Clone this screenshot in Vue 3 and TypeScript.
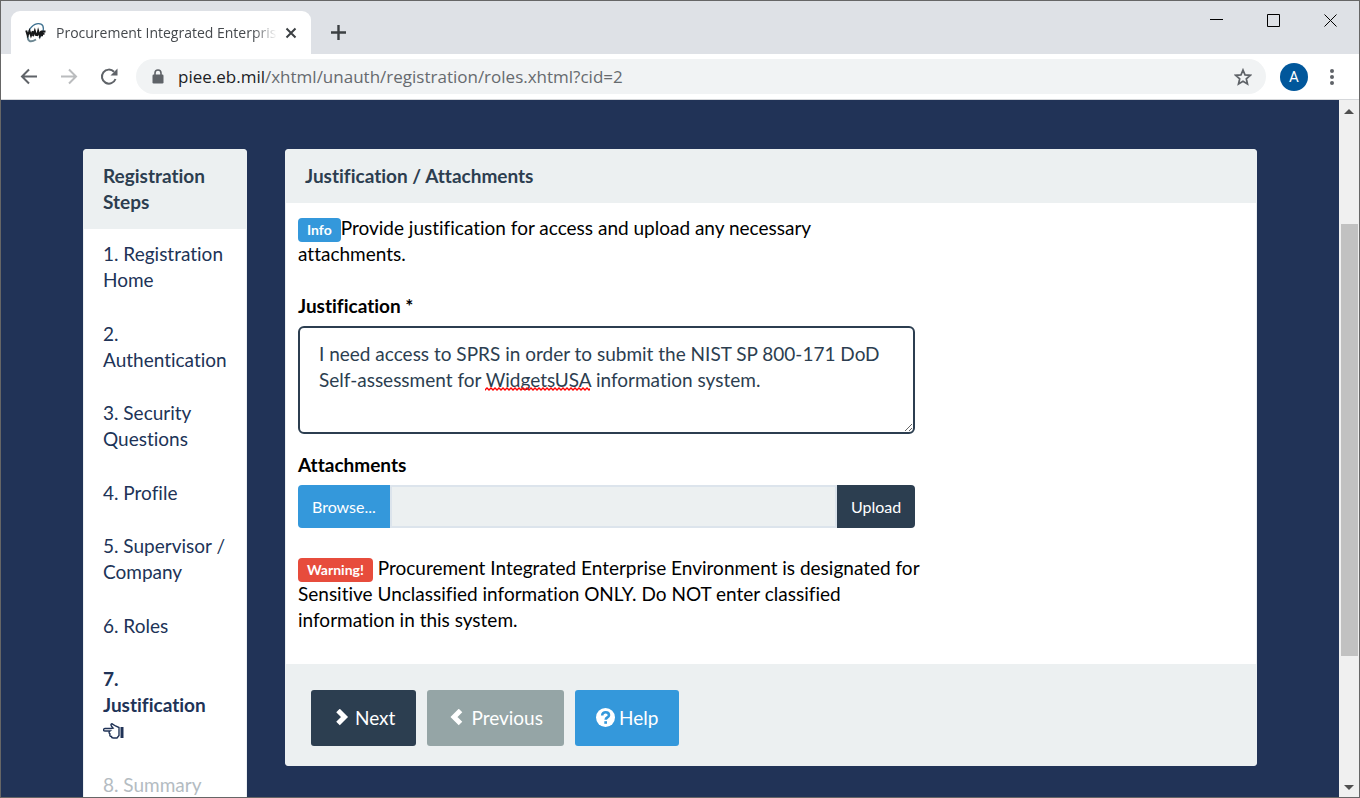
<script setup lang="ts">
import { ref } from 'vue'

interface Step {
  label: string
  state?: 'current' | 'disabled'
}

const steps: Step[] = [
  { label: '1. Registration Home' },
  { label: '2. Authentication' },
  { label: '3. Security Questions' },
  { label: '4. Profile' },
  { label: '5. Supervisor / Company' },
  { label: '6. Roles' },
  { label: '7. Justification', state: 'current' },
  { label: '8. Summary', state: 'disabled' },
]

const justification = ref(
  'I need access to SPRS in order to submit the NIST SP 800-171 DoD Self-assessment for WidgetsUSA information system.',
)
const fileName = ref('')
</script>

<template>
  <div class="window">
    <header class="tabstrip">
      <div class="tab">
        <svg class="favicon" viewBox="0 0 22 20" aria-hidden="true">
          <path d="M4 8C7 1 13-.2 16 1.200C20 3 18.500 11 14 15" fill="none" stroke="#3e7190" stroke-width="1.300" />
          <path d="M3 12.500C2 18 5 20 11 16.500" fill="none" stroke="#6c8792" stroke-width="2" />
          <path d="M1.200 7.500l1.500 5L4.500 8l1.500 4.500L7.800 8M8 13.200l1.800-5.400 1.500 5M12 13l1.200-5L14.800 13l1.400-5M17 13.200V8.400H20.500M17 10.800H19.500" fill="none" stroke="#17191a" stroke-width="2" />
        </svg>
        <span class="tab-title">Procurement Integrated Enterpris</span>
        <button class="plain" type="button" aria-label="Close tab">
          <svg width="12" height="12" viewBox="0 0 12 12"><path d="M1.500 1.500l9 9M10.500 1.500l-9 9" stroke="#3c4043" stroke-width="2" /></svg>
        </button>
      </div>
      <button class="plain new-tab" type="button" aria-label="New tab">
        <svg width="16" height="16" viewBox="0 0 16 16"><path d="M7.500 0v15M0 7.500h15" stroke="#3c4043" stroke-width="2.400" /></svg>
      </button>
      <div class="controls">
        <button class="plain" type="button" aria-label="Minimize">
          <svg width="13" height="13" viewBox="0 0 13 13"><path d="M0 5.500h13" stroke="#000" /></svg>
        </button>
        <button class="plain" type="button" aria-label="Maximize">
          <svg width="13" height="13" viewBox="0 0 13 13"><path d="M.5.5h12v12H.5z" fill="none" stroke="#000" /></svg>
        </button>
        <button class="plain" type="button" aria-label="Close">
          <svg width="13" height="13" viewBox="0 0 13 13"><path d="M.5.5l12 12M12.500.5l-12 12" stroke="#000" /></svg>
        </button>
      </div>
    </header>

    <div class="toolbar">
      <button class="plain" type="button" aria-label="Back">
        <svg width="18" height="18" viewBox="0 0 18 18"><path d="M17 8.500H2M9 1.500l-7 7 7 7" fill="none" stroke="#5f6368" stroke-width="2" /></svg>
      </button>
      <button class="plain" type="button" aria-label="Forward">
        <svg width="18" height="18" viewBox="0 0 18 18"><path d="M1 8.500h15M9 1.500l7 7-7 7" fill="none" stroke="#babcbe" stroke-width="2" /></svg>
      </button>
      <button class="plain" type="button" aria-label="Reload">
        <svg width="18" height="18" viewBox="0 0 18 18"><path d="M15.500 11A7 7 0 1 1 14 3.800" fill="none" stroke="#5f6368" stroke-width="2" /><path d="M17.500.5v7h-7z" fill="#5f6368" /></svg>
      </button>
      <div class="omnibox">
        <svg width="12" height="16" viewBox="0 0 12 16" aria-hidden="true"><path d="M3 6V4a3 3 0 0 1 6 0v2" fill="none" stroke="#5f6368" stroke-width="1.600" /><rect x="0.500" y="5.500" width="11" height="9" rx="1.200" fill="#5f6368" /></svg>
        <div class="url"><span class="host">piee.eb.mil</span>/xhtml/unauth/registration/roles.xhtml?cid=2</div>
        <button class="plain" type="button" aria-label="Bookmark this page">
          <svg width="18" height="18" viewBox="0 0 18 18"><path d="M9 2l2 4.900 5.300.4-4 3.500 1.200 5.200L9 13.200 4.500 16l1.200-5.200-4-3.500L7 6.900z" fill="none" stroke="#5f6368" stroke-width="1.700" /></svg>
        </button>
      </div>
      <button class="avatar" type="button" aria-label="Profile A">A</button>
      <button class="plain" type="button" aria-label="Menu">
        <svg width="4" height="16" viewBox="0 0 4 16"><g fill="#5f6368"><circle cx="2" cy="2" r="2" /><circle cx="2" cy="8" r="2" /><circle cx="2" cy="14" r="2" /></g></svg>
      </button>
    </div>

    <div class="viewport">
      <div class="page">
        <nav class="panel steps" aria-label="Registration Steps">
          <h2>Registration Steps</h2>
          <ol>
            <li v-for="step in steps" :key="step.label" :class="step.state">
              <span v-if="step.state === 'disabled'">{{ step.label }}</span>
              <a v-else href="#">{{ step.label }}</a>
              <svg v-if="step.state === 'current'" class="hand" viewBox="0 0 21 16" aria-hidden="true">
                <path d="M8 5.500H2C0 5.500 0 8 2 8H7C5.500 9 6 10.500 7 11c-.5 1.500 0 2.500 1.500 2.500 0 1 1 1.500 2 1.500H14l2-2.500V4.500L12.500 3 9 .8C7.500 1 7.500 2.500 10 5z" fill="none" stroke="#203357" stroke-width="1.400" />
                <path d="M17.500 4H20.500v11h-3z" fill="#203357" />
              </svg>
            </li>
          </ol>
        </nav>

        <main class="panel main">
          <h2>Justification / Attachments</h2>
          <form @submit.prevent>
            <div class="fields">
              <p class="intro"><span class="badge info">Info</span>Provide justification for access and upload any necessary attachments.</p>
              <label class="caption" for="justification">Justification *</label>
              <div class="editor">
                <textarea id="justification" v-model="justification"></textarea>
                <svg class="squiggle" width="105" height="4" aria-hidden="true">
                  <defs><pattern id="wave" width="4" height="4" patternUnits="userSpaceOnUse"><path d="M-1 2L0 3l2-2 2 2 1-1" fill="none" stroke="#f00" stroke-width="1.300" /></pattern></defs>
                  <rect width="105" height="4" fill="url(#wave)" />
                </svg>
              </div>
              <label class="caption" for="attachment">Attachments</label>
              <div class="upload">
                <button class="browse" type="button">Browse...</button>
                <input id="attachment" v-model="fileName" type="text" readonly />
                <button class="send" type="button">Upload</button>
              </div>
              <p class="notice"><span class="badge warning">Warning!</span> Procurement Integrated Enterprise Environment is designated for Sensitive Unclassified information ONLY. Do NOT enter classified information in this system.</p>
            </div>
            <footer>
              <button class="btn next" type="submit">
                <svg width="19" height="18" viewBox="0 0 19 18" aria-hidden="true"><path d="M6 1.500L12.500 8 6 14.500" fill="none" stroke="#fff" stroke-width="5" /></svg>
                Next
              </button>
              <button class="btn previous" type="button">
                <svg width="19" height="18" viewBox="0 0 19 18" aria-hidden="true"><path d="M12.500 1.500L6 8l6.500 6.500" fill="none" stroke="#fff" stroke-width="5" /></svg>
                Previous
              </button>
              <button class="btn help" type="button">
                <svg width="19" height="21" viewBox="0 0 19 21" aria-hidden="true"><circle cx="9.500" cy="9.500" r="9.500" fill="#fff" /><path d="M6.200 7.500C6.200 3 13 3.400 13 7.200c0 2.300-3.300 2.200-3.300 4.600" fill="none" stroke="#3498db" stroke-width="2.600" /><path d="M8.300 13.200H11v2.600H8.300z" fill="#3498db" /></svg>
                Help
              </button>
            </footer>
          </form>
        </main>
      </div>

      <div class="scrollbar" aria-hidden="true">
        <svg width="10" height="5" viewBox="0 0 10 5"><path d="M0 5l5-5 5 5z" fill="#505050" /></svg>
        <div class="track"><div class="thumb"></div></div>
        <svg width="10" height="5" viewBox="0 0 10 5"><path d="M0 0l5 5 5-5z" fill="#505050" /></svg>
      </div>
    </div>
  </div>
</template>

<style>
body {
  margin: 0;
}
</style>

<style scoped>
* {
  box-sizing: border-box;
}
.window {
  display: flex;
  flex-direction: column;
  height: 100vh;
  border: 1px solid #666;
  overflow: hidden;
  background: #213357;
  font-family: Lato, sans-serif;
  font-size: 19px;
  font-variant-ligatures: no-common-ligatures;
  line-height: 26px;
  color: #000;
}
button,
input,
textarea {
  font: inherit;
  font-variant-ligatures: inherit;
  margin: 0;
}
.plain {
  display: flex;
  padding: 0;
  border: 0;
  background: none;
}
svg {
  flex: none;
}

.tabstrip {
  display: flex;
  flex: none;
  height: 53px;
  padding: 10px 22px 0 10px;
  background: #dee1e6;
}
.tab {
  display: flex;
  align-items: center;
  width: 300px;
  padding: 0 14px;
  border-radius: 9px 9px 0 0;
  background: #fff;
}
.favicon {
  width: 22px;
  height: 20px;
  margin-right: 9px;
}
.tab-title {
  flex: 1;
  margin-right: 8px;
  white-space: nowrap;
  font-family: "Open Sans", sans-serif;
  font-size: 14px;
  color: #45494d;
  mask-image: linear-gradient(to left, transparent, #000 24px);
}
.new-tab {
  align-self: center;
  margin-left: 20px;
}
.controls {
  display: flex;
  gap: 44px;
  height: 18px;
  margin-left: auto;
  align-items: center;
}

.toolbar {
  display: flex;
  flex: none;
  align-items: center;
  gap: 22px;
  height: 46px;
  padding: 0 25px 0 19px;
  border-bottom: 1px solid #d5d7da;
  background: #fff;
}
.omnibox {
  display: flex;
  flex: 1;
  align-items: center;
  gap: 14px;
  height: 35px;
  margin-left: -4px;
  margin-right: -8px;
  padding: 0 14px 0 16px;
  border-radius: 18px;
  background: #f1f3f4;
}
.url {
  flex: 1;
  font-family: "Open Sans", sans-serif;
  font-size: 17px;
  color: #666a6e;
}
.host {
  color: #202124;
}
.avatar {
  width: 28px;
  height: 28px;
  padding: 0;
  border: 0;
  border-radius: 50%;
  background: #01579b;
  color: #fff;
  font-family: Roboto, sans-serif;
  font-size: 15px;
}

.viewport {
  display: flex;
  flex: 1;
  min-height: 0;
}
.page {
  display: flex;
  flex: 1;
  align-items: flex-start;
  gap: 38px;
  padding: 49px 82px 0;
  overflow: hidden;
}
.panel {
  border: 1px solid #ecf0f1;
  border-radius: 3px;
  background: #fff;
}
h2 {
  margin: 0;
  padding: 13px 19px 14px;
  background: #ecf0f1;
  font-size: 19px;
  font-weight: 700;
  color: #2c3e50;
}
.steps {
  flex: none;
  width: 164px;
}
.steps ol {
  margin: 0;
  padding: 12px 16px 0 19px;
  list-style: none;
}
.steps li {
  padding-bottom: 27px;
}
.steps li:nth-child(odd) {
  padding-bottom: 28px;
}
.steps a {
  color: #203357;
  text-decoration: none;
}
.steps .current {
  padding-right: 16px;
  font-weight: 700;
}
.disabled {
  color: #b4bcc2;
}
.hand {
  display: block;
  width: 21px;
  height: 16px;
  margin: 5px 0;
}

.main {
  flex: 1;
}
.fields {
  width: 66%;
  padding: 12px 5px 31px 12px;
}
p {
  margin: 0;
}
.intro {
  max-width: 90%;
  margin-bottom: 26px;
}
.notice {
  margin-top: 27px;
}
.badge {
  padding: 3px 9px 4px;
  border-radius: 4px;
  color: #fff;
  font-size: 14px;
  font-weight: 700;
  line-height: 1;
}
.info,
.browse,
.help {
  background: #3498db;
}
.warning {
  background: #e74c3c;
}
.caption {
  display: block;
  margin-bottom: 7px;
  font-weight: 700;
}
.editor {
  position: relative;
  margin-right: 6px;
  margin-bottom: 18px;
}
textarea {
  display: block;
  width: 100%;
  height: 108px;
  padding: 13px 19px;
  border: 2px solid #2c3e50;
  border-radius: 6px;
  outline: 0;
  color: #2c3e50;
}
.squiggle {
  position: absolute;
  left: 187px;
  top: 61px;
}
.upload {
  display: flex;
  height: 43px;
  margin-right: 6px;
}
.upload button {
  padding: 0 14px;
  border: 0;
  color: #fff;
  font-size: 16px;
}
.upload .browse {
  border-radius: 4px 0 0 4px;
}
.upload .send {
  border-radius: 0 4px 4px 0;
  background: #2c3e50;
}
.upload input {
  flex: 1;
  min-width: 0;
  padding: 0 12px;
  border: 2px solid #dce4ec;
  background: #ecf0f1;
}
footer {
  display: flex;
  gap: 11px;
  padding: 26px 25px 19px;
  background: #ecf0f1;
}
.btn {
  display: flex;
  align-items: center;
  gap: 4px;
  height: 56px;
  padding: 0 21px;
  border: 0;
  border-radius: 3px;
  color: #fff;
}
.next {
  background: #2c3e50;
}
.previous {
  background: #95a5a6;
}

.scrollbar {
  display: flex;
  flex: none;
  flex-direction: column;
  align-items: center;
  gap: 7px;
  width: 20px;
  padding: 9px 0 7px;
  background: #f0f0f0;
}
.track {
  flex: 1;
  width: 17px;
  padding-top: 103px;
}
.thumb {
  height: 78%;
  background: #c1c1c1;
}
</style>
